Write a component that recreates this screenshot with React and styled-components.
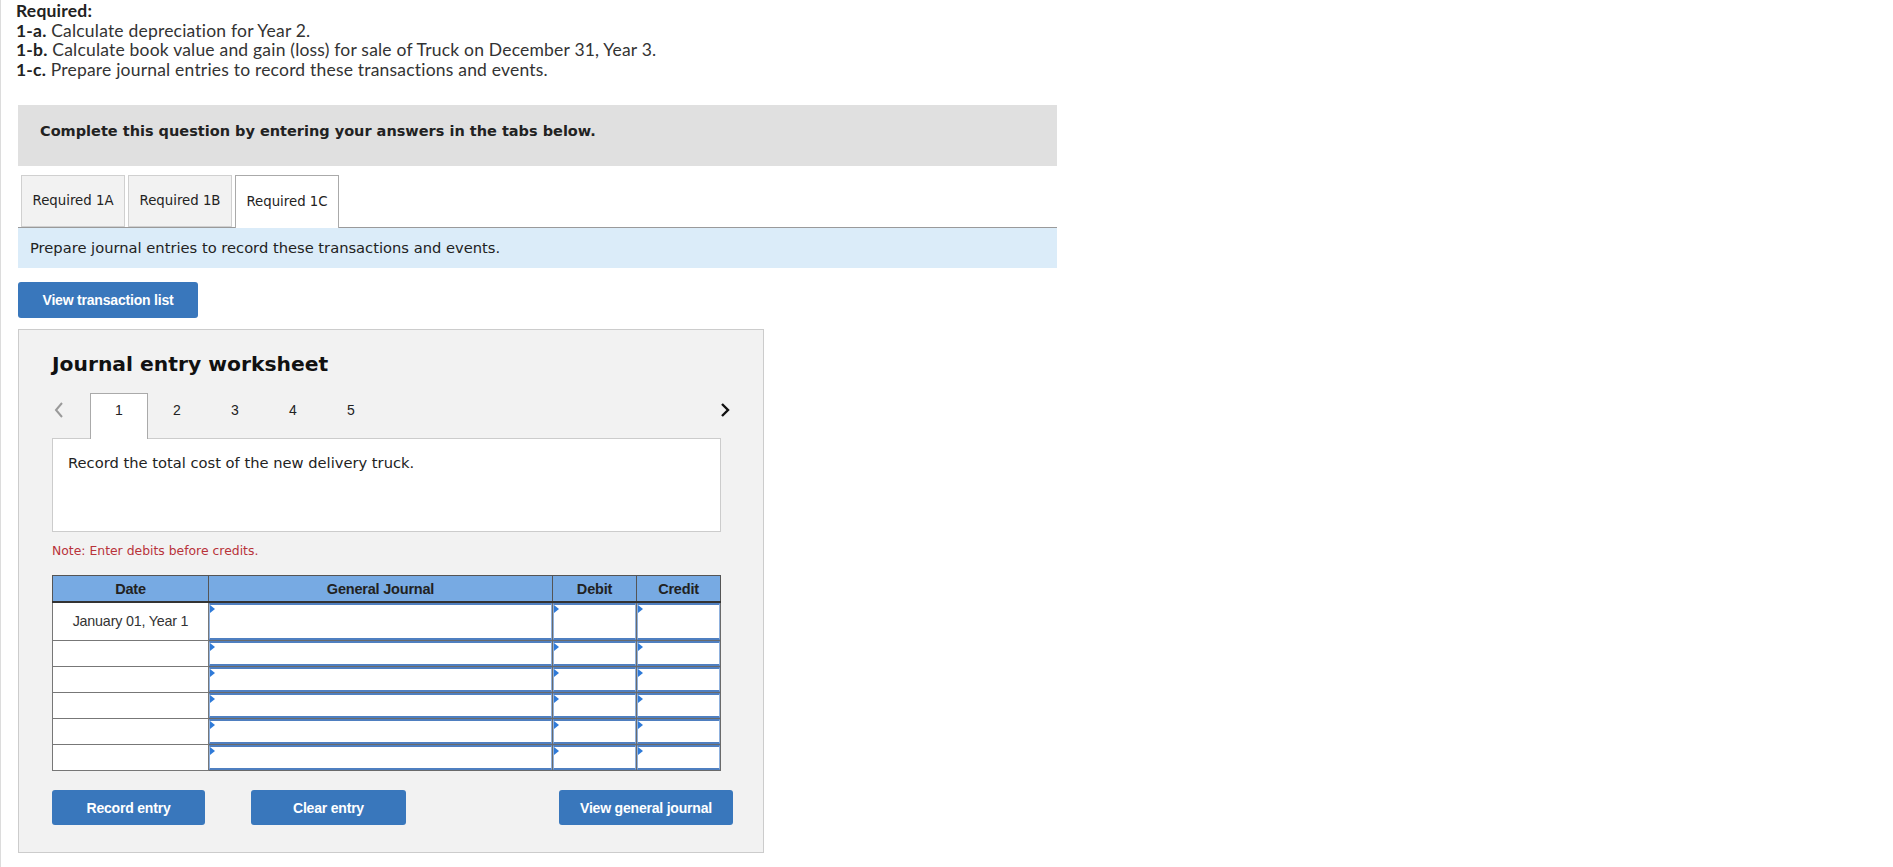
import React from 'react';
import styled, { createGlobalStyle } from 'styled-components';

const GlobalStyle = createGlobalStyle`
  html, body { margin: 0; padding: 0; background: #fff; }
  body { font-family: Lato, "Liberation Sans", Arial, sans-serif; }
  * { box-sizing: border-box; }
`;

const Page = styled.div`
  min-height: 867px;
  border-left: 1px solid #dcdcdc;
`;

const Intro = styled.div`
  padding: 1px 0 0 15px;
  font-family: Lato, "Liberation Sans", sans-serif;
  font-size: 17.5px;
  letter-spacing: 0.2px;
  line-height: 19.7px;
  color: #333;
`;

const Line = styled.div``;

const Strong = styled.span`
  font-weight: 700;
  color: #222;
`;

const Main = styled.div`
  margin: 25px 0 0 17px;
  width: 1039px;
`;

const QuestionBox = styled.div`
  height: 61px;
  background: #e0e0e0;
  padding: 17px 0 0 22px;
  font-family: "DejaVu Sans", Verdana, sans-serif;
  font-weight: 700;
  font-size: 14.5px;
  line-height: 18px;
  color: #222;
`;

const TabList = styled.div`
  display: flex;
  gap: 3px;
  margin-top: 9px;
  padding-left: 3px;
  border-bottom: 1px solid #9a9a9a;
  height: 53px;
`;

const Tab = styled.div`
  width: 104px;
  height: ${p => (p.$active ? '53px' : '52px')};
  display: flex;
  align-items: center;
  justify-content: center;
  font-family: "DejaVu Sans", Verdana, sans-serif;
  font-size: 13.3px;
  color: #222;
  background: ${p => (p.$active ? '#fff' : '#f2f2f2')};
  border: 1px solid ${p => (p.$active ? '#aaa' : '#d0d0d0')};
  border-bottom: ${p => (p.$active ? 'none' : '1px solid #d0d0d0')};
  margin-bottom: ${p => (p.$active ? '-1px' : '0')};
  position: relative;
`;

const InfoBar = styled.div`
  height: 40px;
  background: #dbecf9;
  display: flex;
  align-items: center;
  padding-left: 12px;
  font-family: "DejaVu Sans", Verdana, sans-serif;
  font-size: 14.7px;
  color: #222;
`;

const Button = styled.button`
  display: flex;
  align-items: center;
  justify-content: center;
  width: ${p => p.$w}px;
  height: ${p => p.$h || 35}px;
  background: #3977bc;
  border: none;
  border-radius: 3px;
  color: #fff;
  font-family: "Liberation Sans", Arial, sans-serif;
  font-weight: 700;
  font-size: 14px;
  letter-spacing: -0.2px;
  padding: 0;
  margin: 0;
  cursor: pointer;
`;

const TopButton = styled(Button)`
  margin-top: 14px;
`;

const Panel = styled.div`
  margin-top: 11px;
  width: 746px;
  background: #f2f2f2;
  border: 1px solid #cccccc;
  padding: 23px 42px 27px 33px;
`;

const Title = styled.h2`
  margin: 0;
  font-family: "DejaVu Sans", Verdana, sans-serif;
  font-weight: 700;
  font-size: 20.3px;
  line-height: 22px;
  color: #111;
`;

const Nav = styled.div`
  display: flex;
  height: 45px;
  margin-top: 18px;
  position: relative;
  z-index: 1;
`;

const Arrow = styled.div`
  width: ${p => p.$w}px;
  padding-top: 8px;
  padding-left: ${p => p.$pl || 0}px;
  margin-left: ${p => (p.$right ? 'auto' : '0')};
  margin-right: ${p => (p.$right ? '-9px' : '0')};
`;

const NumTab = styled.div`
  width: 58px;
  height: ${p => (p.$active ? '46px' : '45px')};
  padding-top: 8px;
  text-align: center;
  font-family: "Liberation Sans", Arial, sans-serif;
  font-size: 14px;
  line-height: 16px;
  color: #222;
  background: ${p => (p.$active ? '#fff' : 'transparent')};
  border: ${p => (p.$active ? '1px solid #aaa' : '1px solid transparent')};
  border-bottom: none;
`;

const Desc = styled.div`
  height: 94px;
  background: #fff;
  border: 1px solid #cccccc;
  padding: 15px 15px;
  font-family: "DejaVu Sans", Verdana, sans-serif;
  font-size: 14.7px;
  line-height: 18px;
  color: #222;
`;

const Note = styled.div`
  margin-top: 11px;
  font-family: "DejaVu Sans", Verdana, sans-serif;
  font-size: 12.4px;
  line-height: 16px;
  color: #b8333a;
`;

const Table = styled.table`
  margin-top: 16px;
  width: 668px;
  border-collapse: collapse;
  table-layout: fixed;
  background: #fff;
`;

const Th = styled.th`
  height: 27px;
  width: ${p => p.$w}px;
  background: #77aae3;
  border: 1px solid #555;
  border-bottom: 2px solid #333;
  font-family: "Liberation Sans", Arial, sans-serif;
  font-weight: 700;
  font-size: 14.5px;
  letter-spacing: -0.2px;
  color: #222;
  padding: 0;
`;

const Tr = styled.tr`
  height: ${p => p.$h}px;
`;

const DateCell = styled.td`
  border: 1px solid #777;
  background: #fff;
  text-align: center;
  font-family: "Liberation Sans", Arial, sans-serif;
  font-size: 14.3px;
  letter-spacing: -0.2px;
  color: #333;
  padding: 0 0 2px;
`;

const InputCell = styled.td`
  border: 1px solid #6a6a6a;
  padding: 0;
  height: inherit;
`;

const Field = styled.div`
  position: relative;
  height: ${p => p.$h}px;
  background: #fff;
  border-top: 2px solid #4f7fc0;
  border-bottom: 2px solid #4f7fc0;
  border-left: 1px solid #8fb1de;
  border-right: 1px solid #8fb1de;
`;

const Marker = styled.span`
  position: absolute;
  top: 0;
  left: 0;
  width: 0;
  height: 0;
  border-left: 5px solid #2f7ad8;
  border-top: 4px solid transparent;
  border-bottom: 4px solid transparent;
`;

const ButtonRow = styled.div`
  display: flex;
  margin-top: 19px;
  gap: 46px;
`;

const LastButton = styled(Button)`
  margin-left: auto;
  margin-right: -12px;
`;

const ChevronLeft = () => (
  <svg width="10" height="18" viewBox="0 0 10 18">
    <polyline points="8,2 2,9 8,16" fill="none" stroke="#9a9a9a" strokeWidth="2" />
  </svg>
);

const ChevronRight = () => (
  <svg width="10" height="18" viewBox="0 0 10 18">
    <polyline points="2,3 8,9 2,15" fill="none" stroke="#111" strokeWidth="2.4" />
  </svg>
);

const rows = [
  { date: 'January 01, Year 1', h: 38 },
  { date: '', h: 26 },
  { date: '', h: 26 },
  { date: '', h: 26 },
  { date: '', h: 26 },
  { date: '', h: 26 },
];

const Input = ({ h }) => (
  <InputCell>
    <Field $h={h}>
      <Marker />
    </Field>
  </InputCell>
);

export default function App() {
  return (
    <>
      <GlobalStyle />
      <Page>
        <Intro>
          <Line><Strong>Required:</Strong></Line>
          <Line><Strong>1-a.</Strong> Calculate depreciation for Year 2.</Line>
          <Line><Strong>1-b.</Strong> Calculate book value and gain (loss) for sale of Truck on December 31, Year 3.</Line>
          <Line><Strong>1-c.</Strong> Prepare journal entries to record these transactions and events.</Line>
        </Intro>
        <Main>
          <QuestionBox>Complete this question by entering your answers in the tabs below.</QuestionBox>
          <TabList>
            <Tab>Required 1A</Tab>
            <Tab>Required 1B</Tab>
            <Tab $active>Required 1C</Tab>
          </TabList>
          <InfoBar>Prepare journal entries to record these transactions and events.</InfoBar>
          <TopButton $w={180} $h={36}>View transaction list</TopButton>
          <Panel>
            <Title>Journal entry worksheet</Title>
            <Nav>
              <Arrow $w={38} $pl={2}><ChevronLeft /></Arrow>
              {[1, 2, 3, 4, 5].map(n => (
                <NumTab key={n} $active={n === 1}>{n}</NumTab>
              ))}
              <Arrow $w={10} $right><ChevronRight /></Arrow>
            </Nav>
            <Desc>Record the total cost of the new delivery truck.</Desc>
            <Note>Note: Enter debits before credits.</Note>
            <Table>
              <thead>
                <tr>
                  <Th $w={156}>Date</Th>
                  <Th $w={344}>General Journal</Th>
                  <Th $w={84}>Debit</Th>
                  <Th $w={84}>Credit</Th>
                </tr>
              </thead>
              <tbody>
                {rows.map((r, i) => (
                  <Tr key={i} $h={r.h}>
                    <DateCell>{r.date}</DateCell>
                    <Input h={r.h - 1} />
                    <Input h={r.h - 1} />
                    <Input h={r.h - 1} />
                  </Tr>
                ))}
              </tbody>
            </Table>
            <ButtonRow>
              <Button $w={153}>Record entry</Button>
              <Button $w={155}>Clear entry</Button>
              <LastButton $w={174}>View general journal</LastButton>
            </ButtonRow>
          </Panel>
        </Main>
      </Page>
    </>
  );
}
